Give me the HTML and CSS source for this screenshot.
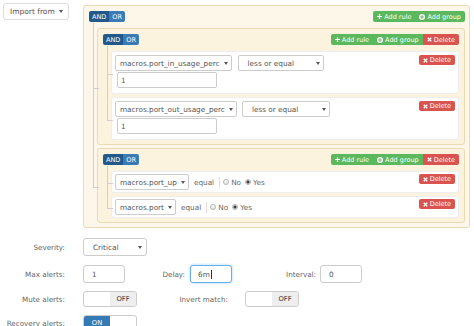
FILE: index.html
```html
<!DOCTYPE html>
<html>
<head>
<meta charset="utf-8">
<title>Alert rule</title>
<link rel="stylesheet" href="styles.css">
</head>
<body>
<div class="top">
  <div class="import-col">
    <div class="btn-import">Import from <span class="caret"></span></div>
  </div>
  <div class="builder">
    <div class="group outer">
      <div class="group-header">
        <div class="conds"><span class="cond active">AND</span><span class="cond">OR</span></div>
        <div class="actions">
          <span class="abtn green"><svg width="5" height="5" viewBox="0 0 10 10"><path d="M3.8 0h2.4v3.8H10v2.4H6.2V10H3.8V6.2H0V3.8h3.8z" fill="#fff"/></svg>Add rule</span><span class="abtn green"><svg width="6" height="6" viewBox="0 0 12 12"><circle cx="6" cy="6" r="6" fill="#fff"/><path d="M5 2.5h2V5h2.5v2H7v2.5H5V7H2.5V5H5z" fill="#5cb85c"/></svg>Add group</span>
        </div>
      </div>
      <ul class="rules-list">
        <li class="group inner">
          <div class="group-header">
            <div class="conds"><span class="cond active">AND</span><span class="cond">OR</span></div>
            <div class="actions">
              <span class="abtn green"><svg width="5" height="5" viewBox="0 0 10 10"><path d="M3.8 0h2.4v3.8H10v2.4H6.2V10H3.8V6.2H0V3.8h3.8z" fill="#fff"/></svg>Add rule</span><span class="abtn green"><svg width="6" height="6" viewBox="0 0 12 12"><circle cx="6" cy="6" r="6" fill="#fff"/><path d="M5 2.5h2V5h2.5v2H7v2.5H5V7H2.5V5H5z" fill="#5cb85c"/></svg>Add group</span><span class="abtn red"><svg width="5" height="5" viewBox="0 0 10 10"><path d="M1.5 1.5l7 7M8.5 1.5l-7 7" stroke="#fff" stroke-width="2.6"/></svg>Delete</span>
            </div>
          </div>
          <ul class="rules-list">
            <li class="rule">
              <div class="rule-main">
                <div class="rule-row">
                  <span class="sel filter">macros.port_in_usage_perc <span class="caret"></span></span>
                  <span class="sel op op1">less or equal <span class="caret"></span></span>
                </div>
                <div class="value-row"><span class="val">1</span></div>
              </div>
              <span class="abtn red del"><svg width="5" height="5" viewBox="0 0 10 10"><path d="M1.5 1.5l7 7M8.5 1.5l-7 7" stroke="#fff" stroke-width="2.6"/></svg>Delete</span>
            </li>
            <li class="rule">
              <div class="rule-main">
                <div class="rule-row">
                  <span class="sel filter">macros.port_out_usage_perc <span class="caret"></span></span>
                  <span class="sel op op2">less or equal <span class="caret"></span></span>
                </div>
                <div class="value-row"><span class="val">1</span></div>
              </div>
              <span class="abtn red del"><svg width="5" height="5" viewBox="0 0 10 10"><path d="M1.5 1.5l7 7M8.5 1.5l-7 7" stroke="#fff" stroke-width="2.6"/></svg>Delete</span>
            </li>
          </ul>
        </li>
        <li class="group inner">
          <div class="group-header">
            <div class="conds"><span class="cond active">AND</span><span class="cond">OR</span></div>
            <div class="actions">
              <span class="abtn green"><svg width="5" height="5" viewBox="0 0 10 10"><path d="M3.8 0h2.4v3.8H10v2.4H6.2V10H3.8V6.2H0V3.8h3.8z" fill="#fff"/></svg>Add rule</span><span class="abtn green"><svg width="6" height="6" viewBox="0 0 12 12"><circle cx="6" cy="6" r="6" fill="#fff"/><path d="M5 2.5h2V5h2.5v2H7v2.5H5V7H2.5V5H5z" fill="#5cb85c"/></svg>Add group</span><span class="abtn red"><svg width="5" height="5" viewBox="0 0 10 10"><path d="M1.5 1.5l7 7M8.5 1.5l-7 7" stroke="#fff" stroke-width="2.6"/></svg>Delete</span>
            </div>
          </div>
          <ul class="rules-list">
            <li class="rule single">
              <div class="rule-main">
                <div class="rule-row">
                  <span class="sel filter">macros.port_up <span class="caret"></span></span>
                  <span class="op-text">equal</span>
                  <span class="radios"><span class="radio"></span><span class="rlabel">No</span><span class="radio checked"></span><span class="rlabel">Yes</span></span>
                </div>
              </div>
              <span class="abtn red del"><svg width="5" height="5" viewBox="0 0 10 10"><path d="M1.5 1.5l7 7M8.5 1.5l-7 7" stroke="#fff" stroke-width="2.6"/></svg>Delete</span>
            </li>
            <li class="rule single">
              <div class="rule-main">
                <div class="rule-row">
                  <span class="sel filter">macros.port <span class="caret"></span></span>
                  <span class="op-text">equal</span>
                  <span class="radios"><span class="radio"></span><span class="rlabel">No</span><span class="radio checked"></span><span class="rlabel">Yes</span></span>
                </div>
              </div>
              <span class="abtn red del"><svg width="5" height="5" viewBox="0 0 10 10"><path d="M1.5 1.5l7 7M8.5 1.5l-7 7" stroke="#fff" stroke-width="2.6"/></svg>Delete</span>
            </li>
          </ul>
        </li>
      </ul>
    </div>
  </div>
</div>

<div class="form">
  <div class="frow">
    <span class="lbl">Severity:</span>
    <span class="fsel">Critical <span class="caret"></span></span>
  </div>
  <div class="frow">
    <span class="lbl">Max alerts:</span>
    <span class="finput">1</span>
    <span class="lbl lbl-delay">Delay:</span>
    <span class="finput focus">6m<span class="cursor"></span></span>
    <span class="lbl lbl-interval">Interval:</span>
    <span class="finput">0</span>
  </div>
  <div class="frow sw">
    <span class="lbl">Mute alerts:</span>
    <span class="switch"><span class="half"></span><span class="half off">OFF</span></span>
    <span class="lbl lbl-invert">Invert match:</span>
    <span class="switch"><span class="half"></span><span class="half off">OFF</span></span>
  </div>
  <div class="frow sw">
    <span class="lbl">Recovery alerts:</span>
    <span class="switch"><span class="half on">ON</span><span class="half"></span></span>
  </div>
</div>
</body>
</html>
```

FILE: styles.css
```css
* { box-sizing: border-box; }

html, body {
  margin: 0;
  padding: 0;
  background: #fff;
}

body {
  width: 474px;
  height: 326px;
  overflow: hidden;
  font-family: "DejaVu Sans", Verdana, sans-serif;
  color: #555;
}

.caret {
  display: inline-block;
  width: 0;
  height: 0;
  border-top: 3px solid #555;
  border-left: 2px solid transparent;
  border-right: 2px solid transparent;
  flex: none;
}

.top {
  display: flex;
  align-items: flex-start;
}

.import-col {
  width: 83px;
  flex: none;
  padding: 3px 0 0 3px;
}

.btn-import {
  display: flex;
  align-items: center;
  gap: 4px;
  width: 66px;
  height: 17px;
  padding: 0 0 0 6px;
  border: 1px solid #ddd;
  border-radius: 3px;
  background: #fff;
  font-size: 7.5px;
  color: #555;
  white-space: nowrap;
}

.builder {
  width: 387px;
  margin-top: 5px;
}

.group {
  border: 1px solid #eadbb4;
  border-radius: 3px;
  background: #fcf7e9;
  padding: 5px 5px 1px 5px;
}

.group.outer {
  padding: 5px 4px 1px 5px;
}

.group.inner {
  background: #fbf3de;
}

.group-header {
  display: flex;
  justify-content: space-between;
  align-items: center;
  height: 11px;
  margin-bottom: 3px;
}

.conds {
  display: flex;
  height: 11px;
  border-radius: 2px;
  overflow: hidden;
}

.cond {
  display: flex;
  align-items: center;
  padding: 0 3px;
  font-size: 6.5px;
  color: #fff;
  background: #3a7bb6;
}

.cond.active {
  background: #22588a;
}

.actions {
  display: flex;
  height: 11px;
}

.abtn {
  display: inline-flex;
  align-items: center;
  gap: 2px;
  height: 11px;
  padding: 0 4px;
  font-size: 6.5px;
  color: #fff;
  white-space: nowrap;
}

.abtn.green { background: #5cb85c; }
.abtn.red { background: #d9534f; }

.actions .abtn:first-child { border-radius: 2px 0 0 2px; }
.actions .abtn:last-child { border-radius: 0 2px 2px 0; }

.rules-list {
  list-style: none;
  margin: 0;
  padding: 3px 0 3px 8px;
  display: flex;
  flex-direction: column;
  gap: 3px;
}

.rules-list > li {
  position: relative;
  margin: 0;
}

.rules-list > li::before,
.rules-list > li::after {
  content: "";
  position: absolute;
  left: -5px;
  width: 5px;
  border-color: #cfcfcf;
  border-style: solid;
}

.rules-list > li::before {
  top: -2px;
  height: calc(50% + 3px);
  border-width: 0 0 1px 1px;
}

.rules-list > li::after {
  top: 50%;
  height: calc(50% + 3px);
  border-width: 0 0 0 1px;
}

.rules-list > li:first-child::before {
  top: -6px;
  height: calc(50% + 7px);
}

.rules-list > li:last-child::after {
  display: none;
}

.rule {
  display: flex;
  align-items: flex-start;
  background: #fff;
  border: 1px solid #eee;
  border-radius: 3px;
  padding: 3px;
}

.rule.single {
  padding: 2px 3px;
}

.rule-main {
  flex: 1;
}

.rule-row {
  display: flex;
  align-items: center;
  height: 16px;
}

.sel {
  display: inline-flex;
  align-items: center;
  height: 16px;
  border: 1px solid #ccc;
  border-radius: 2px;
  background: #fff;
  font-size: 7.3px;
  color: #555;
  white-space: nowrap;
}

.sel.filter {
  gap: 4px;
  padding: 0 3px 0 4px;
}

.sel.op {
  justify-content: space-between;
  padding: 0 3px 0 9px;
}

.sel.op1 { width: 86px; margin-left: 6px; }
.sel.op2 { width: 88px; margin-left: 5px; }

.value-row {
  margin: 1px 0 2px 2px;
}

.val {
  display: flex;
  align-items: center;
  width: 100px;
  height: 16px;
  padding: 0 3px;
  border: 1px solid #ccc;
  border-radius: 2px;
  font-size: 7.3px;
  color: #555;
  background: #fff;
}

.op-text {
  margin-left: 5px;
  font-size: 7.3px;
  color: #666;
}

.radios {
  display: flex;
  align-items: center;
  height: 11px;
  margin-left: 5px;
  padding-left: 3px;
  border-left: 1px solid #ddd;
  font-size: 7.3px;
  color: #666;
}

.radio {
  width: 6px;
  height: 6px;
  border-radius: 50%;
  border: 1px solid #b5b5b5;
  background: linear-gradient(#fff, #e2e2e2);
  flex: none;
}

.radio.checked {
  background: radial-gradient(circle, #333 0, #444 1.3px, #e8e8e8 1.8px);
}

.rlabel {
  margin: 0 4px 0 2px;
}

.del {
  height: 10px;
  border-radius: 2px;
  flex: none;
}

.form {
  margin-top: 10px;
}

.frow {
  display: flex;
  align-items: center;
  height: 18px;
  margin-bottom: 9px;
}

.frow:nth-child(2) { margin-bottom: 8px; }
.frow.sw { height: 16px; margin-bottom: 8px; }

.lbl {
  flex: none;
  width: 65px;
  margin-right: 18px;
  text-align: right;
  font-size: 7.2px;
  color: #666;
  white-space: nowrap;
}

.lbl-delay { width: 60px; margin-right: 5px; }
.lbl-interval { width: 84px; margin-right: 4px; }
.lbl-invert { width: 91px; margin-right: 17px; }

.fsel {
  display: flex;
  align-items: center;
  justify-content: space-between;
  width: 64px;
  height: 18px;
  padding: 0 4px 0 9px;
  border: 1px solid #ccc;
  border-radius: 3px;
  font-size: 7.3px;
  color: #555;
  background: #fff;
}

.finput {
  display: flex;
  align-items: center;
  width: 42px;
  height: 18px;
  padding: 0 0 0 8px;
  border: 1px solid #ccc;
  border-radius: 3px;
  font-size: 7.3px;
  color: #555;
  background: #fff;
}

.finput.focus {
  padding-left: 7px;
  border-color: #66afe9;
  box-shadow: 0 0 3px rgba(102, 175, 233, 0.6);
}

.cursor {
  display: inline-block;
  width: 1px;
  height: 9px;
  margin-left: 1px;
  background: #333;
}

.switch {
  display: flex;
  width: 54px;
  height: 16px;
  border: 1px solid #ccc;
  border-radius: 3px;
  overflow: hidden;
  background: #fff;
}

.half {
  flex: 1;
  display: flex;
  align-items: center;
  justify-content: center;
  font-size: 6.8px;
}

.half.off {
  background: #eee;
  color: #333;
}

.half.on {
  background: #337ab7;
  color: #fff;
}
```
